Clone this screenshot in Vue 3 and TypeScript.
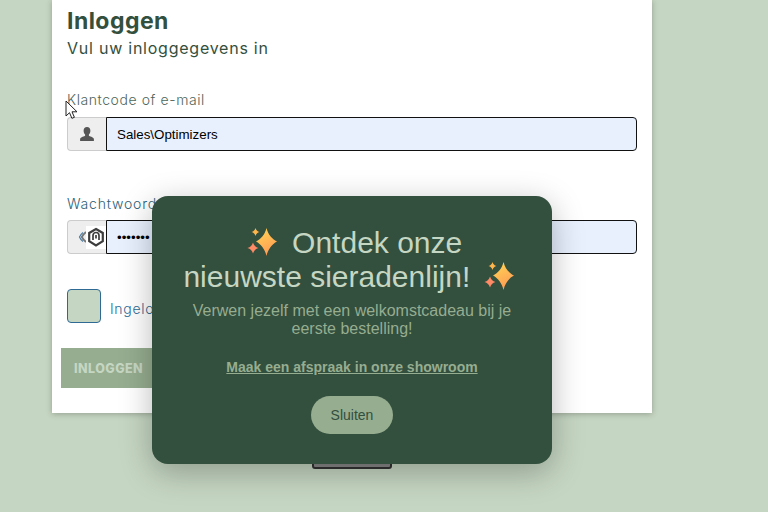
<script setup lang="ts">
const login = 'Sales\\Optimizers'
const secret = 'abcdefg'
</script>

<template>
  <div class="page">
    <main class="card">
      <h1 class="title">Inloggen</h1>
      <p class="sub">Vul uw inloggegevens in</p>

      <label class="label first">Klantcode of e-mail</label>
      <div class="group">
        <span class="addon">
          <svg width="16" height="16" viewBox="0 0 16 16">
            <path fill="#555" d="M8 1c2.200 0 3.400 1.700 3.400 3.800 0 1.500-.6 3-1.500 3.800v1.200c.4.500 4.600 1.300 5 3.200V15H1.100v-2c.4-1.900 4.600-2.700 5-3.200V8.600C5.200 7.800 4.600 6.300 4.600 4.800 4.600 2.700 5.800 1 8 1z" />
          </svg>
        </span>
        <input class="field" type="text" :value="login" />
      </div>

      <label class="label second">Wachtwoord</label>
      <div class="group">
        <span class="addon">
          <svg class="key" width="28" height="24" viewBox="0 0 28 24">
            <path fill="none" stroke="#4a7ea5" stroke-width="1.200" d="M5 7.500Q2.500 9.500 1.500 12q1 2.500 3.500 4.500" />
            <path fill="none" stroke="#777" stroke-width="1.800" d="M8 7Q5 9.500 3.800 12 5 14.500 8 17" />
            <rect x="8" y="1" width="20" height="23" fill="#fff" />
            <path fill="none" stroke="#3d3d3d" stroke-width="2.200" d="M18 4l6.800 4v8.200L18 20.500l-6.800-4.300V8z" />
            <path fill="none" stroke="#3d3d3d" stroke-width="1.700" d="M15 15v-4.500a3 3 0 0 1 6 0V15M18 10v3.500" />
          </svg>
        </span>
        <input class="field" type="password" :value="secret" />
      </div>

      <div class="remember">
        <span class="check"></span>
        <span class="remember-text">Ingelogd blijven</span>
      </div>

      <button class="submit" type="button">INLOGGEN</button>
    </main>

    <button class="under" type="button"></button>

    <section class="modal">
      <h2 class="modal-title">
        <svg class="spark" viewBox="0 0 32 32"><use href="#sp" /></svg>
        Ontdek onze<br />nieuwste sieradenlijn!
        <svg class="spark" viewBox="0 0 32 32">
          <defs>
            <linearGradient id="g" x1="0.2" y1="0" x2="0.6" y2="1">
              <stop offset="0" stop-color="#ffd454" />
              <stop offset="1" stop-color="#ff9a55" />
            </linearGradient>
            <g id="sp">
              <path fill="url(#g)" d="M19.500 2C21 8.500 25 13 30 15.500 25 18 21 23.500 19.500 30 18 23.500 14 18 9 15.500 14 13 18 8.500 19.500 2z" />
              <path fill="#ffb74d" d="M8.500 2C9.200 4.300 10.200 5.300 12.500 6 10.200 6.700 9.200 7.700 8.500 10 7.800 7.700 6.800 6.700 4.500 6 6.800 5.300 7.800 4.300 8.500 2z" />
              <path fill="#ff8a65" d="M6 16.500C7 19.500 8.500 21 11.500 22 8.500 23 7 24.500 6 27.500 5 24.500 3.500 23 .5 22 3.500 21 5 19.500 6 16.500z" />
            </g>
          </defs>
          <use href="#sp" />
        </svg>
      </h2>
      <p class="modal-text">Verwen jezelf met een welkomstcadeau bij je eerste bestelling!</p>
      <a class="modal-link" href="#">Maak een afspraak in onze showroom</a>
      <button class="close" type="button">Sluiten</button>
    </section>

    <svg class="cursor" width="14" height="20" viewBox="0 0 14 20">
      <path fill="#fff" stroke="#222" stroke-width="1" d="M1 1v15l3.500-3.300 2.400 5.600 2.500-1-2.400-5.500h5z" />
    </svg>
  </div>
</template>

<style>
html,
body {
  margin: 0;
  background: #c5d6c2;
}
</style>

<style scoped>
.page {
  position: relative;
  width: 768px;
  height: 512px;
  overflow: hidden;
  background: #c5d6c2;
  font-family: "Inter", "Liberation Sans", sans-serif;
}

.card {
  box-sizing: border-box;
  width: 600px;
  height: 413px;
  margin-left: 52px;
  padding: 8px 15px 0;
  background: #fff;
  box-shadow: 0 1px 6px rgba(0, 0, 0, 0.25);
}

.title {
  margin: 0;
  font-size: 23px;
  line-height: 26px;
  font-weight: 700;
  color: #334f3e;
  letter-spacing: 0.45px;
}

.sub {
  margin: 4px 0 0;
  font-size: 16px;
  line-height: 20px;
  color: #334f3e;
  letter-spacing: 0.76px;
}

.label {
  display: block;
  height: 18px;
  font-size: 14px;
  line-height: 18px;
  font-weight: 300;
  color: #4f665a;
  letter-spacing: 0.58px;
}

.first {
  margin-top: 33px;
}

.second {
  margin-top: 43px;
  line-height: 19px;
  color: #2f6176;
  letter-spacing: 0.8px;
}

.group {
  display: flex;
  height: 34px;
  margin-top: 8px;
}

.addon {
  box-sizing: border-box;
  display: flex;
  flex: 0 0 39px;
  align-items: center;
  justify-content: center;
  background: #eee;
  border: 1px solid #ccc;
  border-right: 0;
  border-radius: 4px 0 0 4px;
}

.key {
  margin-left: 10px;
}

.field {
  box-sizing: border-box;
  flex: 1;
  min-width: 0;
  height: 34px;
  padding: 0 10px;
  background: #e8f0fe;
  border: 1px solid #111;
  border-radius: 0 4px 4px 0;
  outline: 0;
  font-family: "Liberation Sans", Arial, sans-serif;
  font-size: 13.33px;
  color: #000;
}

.remember {
  display: flex;
  align-items: center;
  gap: 9px;
  margin-top: 35px;
}

.check {
  box-sizing: border-box;
  width: 34px;
  height: 34px;
  background: #c5d6c2;
  border: 1px solid #2f6a94;
  border-radius: 4px;
}

.remember-text {
  padding-top: 4px;
  font-size: 14px;
  font-weight: 300;
  color: #2f6a94;
  letter-spacing: 0.7px;
}

.submit {
  display: block;
  box-sizing: border-box;
  width: 140px;
  height: 40px;
  margin: 25px 0 0 -6px;
  padding: 0 0 0 13px;
  background: #96ad90;
  border: 0;
  text-align: left;
  font-family: inherit;
  font-size: 12.5px;
  font-weight: 800;
  color: #c5d6c2;
  letter-spacing: 0.45px;
}

.under {
  display: block;
  box-sizing: border-box;
  width: 80px;
  height: 56px;
  margin: 0 0 0 312px;
  background: #888;
  border: 2px solid #333;
  border-radius: 3px;
}

.modal {
  position: absolute;
  top: 196px;
  left: 152px;
  box-sizing: border-box;
  display: flex;
  flex-direction: column;
  align-items: center;
  width: 400px;
  height: 268px;
  padding: 30px 20px 0;
  background: #334f3e;
  border-radius: 16px;
  box-shadow: 0 8px 32px rgba(0, 0, 0, 0.28);
  text-align: center;
  font-family: "Liberation Sans", Arial, sans-serif;
}

.modal-title {
  margin: 0;
  font-size: 30px;
  line-height: 34px;
  font-weight: 400;
  color: #c5d6c2;
}

.spark {
  width: 32px;
  height: 32px;
  margin: 0 5px;
  vertical-align: -5px;
}

.modal-text {
  width: 340px;
  margin: 8px 0 0;
  font-size: 16px;
  line-height: 18px;
  color: #96ad90;
}

.modal-link {
  margin-top: 21px;
  font-size: 14px;
  line-height: 16px;
  font-weight: 700;
  color: #96ad90;
}

.close {
  width: 82px;
  height: 38px;
  margin-top: 21px;
  padding: 0;
  background: #96ad90;
  border: 0;
  border-radius: 19px;
  font-family: inherit;
  font-size: 14px;
  color: #334f3e;
}

.cursor {
  position: absolute;
  top: 100px;
  left: 65px;
}
</style>
